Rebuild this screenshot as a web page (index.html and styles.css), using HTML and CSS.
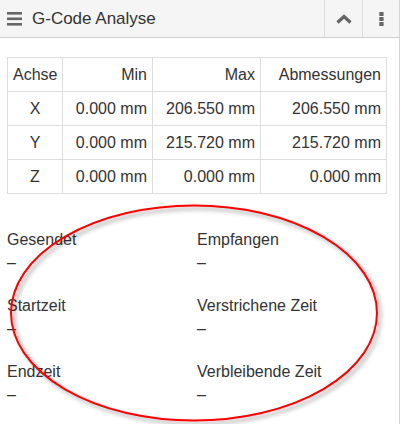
FILE: index.html
```html
<!DOCTYPE html>
<html>
<head>
<meta charset="utf-8">
<link rel="stylesheet" href="styles.css">
</head>
<body>
<div class="panel">
  <div class="panel-header">
    <div class="title-wrap">
      <svg class="hamburger" width="15" height="14" viewBox="0 0 15 14"><rect x="0" y="0" width="15" height="2.6" fill="#666"/><rect x="0" y="5.5" width="15" height="2.6" fill="#666"/><rect x="0" y="11" width="15" height="2.6" fill="#666"/></svg>
      <span class="title">G-Code Analyse</span>
    </div>
    <div class="hbtn btn-collapse">
      <svg width="18" height="12" viewBox="0 0 18 12"><path d="M2.5 9.5 L9 3.5 L15.5 9.5" fill="none" stroke="#666" stroke-width="3.4"/></svg>
    </div>
    <div class="hbtn btn-menu">
      <svg width="5" height="14" viewBox="0 0 5 14"><rect x="0.3" y="0" width="4.3" height="4" rx="0.6" fill="#666"/><rect x="0.3" y="5" width="4.3" height="4" rx="0.6" fill="#666"/><rect x="0.3" y="10" width="4.3" height="4" rx="0.6" fill="#666"/></svg>
    </div>
  </div>
  <div class="panel-body">
    <table class="dims">
      <colgroup><col class="c1"><col class="c2"><col class="c3"><col class="c4"></colgroup>
      <thead>
        <tr><th class="center">Achse</th><th>Min</th><th>Max</th><th>Abmessungen</th></tr>
      </thead>
      <tbody>
        <tr><td class="center">X</td><td>0.000 mm</td><td>206.550 mm</td><td>206.550 mm</td></tr>
        <tr><td class="center">Y</td><td>0.000 mm</td><td>215.720 mm</td><td>215.720 mm</td></tr>
        <tr><td class="center">Z</td><td>0.000 mm</td><td>0.000 mm</td><td>0.000 mm</td></tr>
      </tbody>
    </table>
    <div class="stats">
      <div class="stat"><div class="label">Gesendet</div><div class="value">–</div></div>
      <div class="stat"><div class="label">Empfangen</div><div class="value">–</div></div>
      <div class="stat"><div class="label">Startzeit</div><div class="value">–</div></div>
      <div class="stat"><div class="label">Verstrichene Zeit</div><div class="value">–</div></div>
      <div class="stat"><div class="label">Endzeit</div><div class="value">–</div></div>
      <div class="stat"><div class="label">Verbleibende Zeit</div><div class="value">–</div></div>
    </div>
  </div>
</div>
<svg class="annotation" width="401" height="424" viewBox="0 0 401 424">
  <defs>
    <filter id="sh" x="-10%" y="-10%" width="120%" height="120%">
      <feDropShadow dx="3" dy="3" stdDeviation="2" flood-color="#000" flood-opacity="0.4"/>
    </filter>
  </defs>
  <ellipse cx="194" cy="313" rx="183" ry="107.5" fill="none" stroke="#ff0000" stroke-width="2" filter="url(#sh)"/>
</svg>
</body>
</html>
```
FILE: styles.css
```css
html, body {
  margin: 0;
  padding: 0;
  background: #fff;
}
body {
  font-family: "Liberation Sans", Arial, sans-serif;
  font-size: 16px;
  color: #333;
  width: 401px;
  height: 424px;
  overflow: hidden;
  position: relative;
}
.panel {
  width: 399px;
  border-right: 1px solid #d4d4d4;
  min-height: 424px;
}
.panel-header {
  display: flex;
  height: 37px;
  background: #f5f5f5;
  border-bottom: 1px solid #cfcfcf;
}
.title-wrap {
  flex: 1;
  display: flex;
  align-items: center;
  padding-left: 7px;
  gap: 10px;
}
.hamburger {
  display: block;
}
.title {
  font-size: 17px;
  color: #333;
  line-height: 20px;
}
.hbtn {
  display: flex;
  align-items: center;
  justify-content: center;
  border-left: 1px solid #dcdcdc;
}
.btn-collapse {
  width: 37px;
}
.btn-menu {
  width: 36px;
}
.panel-body {
  padding: 19px 0 0 7px;
}
.dims {
  border-collapse: collapse;
  table-layout: fixed;
  width: 379px;
}
.dims col.c1 { width: 55px; }
.dims col.c2 { width: 90px; }
.dims col.c3 { width: 108px; }
.dims col.c4 { width: 126px; }
.dims th, .dims td {
  border: 1px solid #dddddd;
  padding: 5px 5px;
  line-height: 23px;
  font-weight: normal;
  text-align: right;
  white-space: nowrap;
}
.dims .center {
  text-align: center;
}
.stats {
  display: grid;
  grid-template-columns: 190px 190px;
  margin-top: 34px;
  row-gap: 20px;
}
.stat .label, .stat .value {
  line-height: 23px;
}
.annotation {
  position: absolute;
  left: 0;
  top: 0;
  pointer-events: none;
}
```
